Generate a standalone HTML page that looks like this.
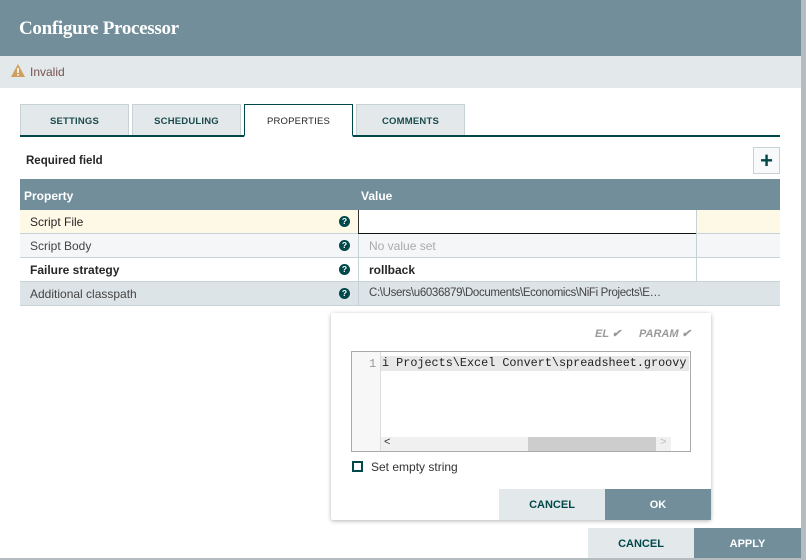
<!DOCTYPE html>
<html><head><style>
*{box-sizing:border-box;margin:0;padding:0}
body{width:806px;height:558px;overflow:hidden;background:#b4bcc0;font-family:"Liberation Sans",sans-serif;position:relative}
.dlg{position:absolute;left:0;top:0;width:801px;height:558px;background:#fff}
.hdr{height:56px;background:#728e9b;color:#fff;font-family:"Liberation Serif",serif;font-weight:bold;font-size:19px;padding:18px 0 0 19px;letter-spacing:-0.3px}
.inv{height:32px;background:#e3e8eb;font-size:12px;color:#775351;padding:9px 0 0 30px;position:relative}
.tabs{position:absolute;top:104px;left:20px;width:760px;height:33px;border-bottom:2px solid #004849}
.tab{position:absolute;top:0;height:31px;width:109px;background:#e3e8eb;border:1px solid #c7d2d7;border-bottom:none;font-size:9.5px;color:#1a4a4c;text-align:center;line-height:33px;font-weight:bold;letter-spacing:.2px}
.tab.act{background:#fff;border:1px solid #004849;border-bottom:2px solid #fff;height:33px;color:#262626;font-weight:normal}
.abs{position:absolute}
.row{position:absolute;left:20px;width:760px;height:24px;font-size:12px;border-bottom:1px solid #c7d2d7}
.row span{position:absolute;top:5px}
.q{position:absolute;left:319px;top:6px;width:11px;height:11px;border-radius:50%;background:#004849;color:#fff;font-size:8.5px;font-weight:bold;text-align:center;line-height:11px}
.btn{position:absolute;font-size:11px;font-weight:bold;text-align:center}
</style></head><body>
<div class="dlg">
<div class="hdr">Configure Processor</div>
<div class="inv"><svg class="abs" style="left:11px;top:8px" width="14" height="13" viewBox="0 0 14 13"><path d="M7 0L14 13H0Z" fill="#cf9f5d"/><rect x="6.2" y="4" width="1.6" height="5" fill="#fff"/><rect x="6.2" y="10" width="1.6" height="1.6" fill="#fff"/></svg><b style="font-weight:normal">Invalid</b></div>
<div class="tabs">
<div class="tab" style="left:0">SETTINGS</div>
<div class="tab" style="left:112px">SCHEDULING</div>
<div class="tab act" style="left:224px">PROPERTIES</div>
<div class="tab" style="left:336px">COMMENTS</div>
</div>
<div class="abs" style="left:26px;top:155px;font-size:11.5px;font-weight:bold;color:#262626">Required field</div>
<div class="abs" style="left:753px;top:147px;width:27px;height:27px;border:1px solid #c7d2d7;background:#f8f9fa;color:#004849;font-size:22px;font-weight:bold;text-align:center;line-height:25px">+</div>
<div class="abs" style="left:20px;top:179px;width:760px;height:31px;background:#728e9b;color:#fff;font-size:12px;font-weight:bold"><span class="abs" style="left:4px;top:10px">Property</span><span class="abs" style="left:341px;top:10px">Value</span></div>
<div class="row" style="top:210px;background:#fef9e6"><span style="left:10px;color:#262626">Script File</span><div class="q">?</div><div class="abs" style="left:338px;top:0;width:339px;height:24px;background:#fff;border-left:1px solid #333;border-bottom:1px solid #111"></div><div class="abs" style="left:676px;top:0;height:24px;border-left:1px solid #c7d2d7"></div></div>
<div class="row" style="top:234px;background:#f4f6f7"><span style="left:10px;color:#444">Script Body</span><div class="q">?</div><span style="left:349px;color:#aaa">No value set</span><div class="abs" style="left:338px;top:0;height:24px;border-left:1px solid #c7d2d7"></div><div class="abs" style="left:676px;top:0;height:24px;border-left:1px solid #c7d2d7"></div></div>
<div class="row" style="top:258px;background:#fff"><span style="left:10px;font-weight:bold;color:#262626">Failure strategy</span><div class="q">?</div><span style="left:349px;font-weight:bold;color:#262626">rollback</span><div class="abs" style="left:338px;top:0;height:24px;border-left:1px solid #c7d2d7"></div><div class="abs" style="left:676px;top:0;height:24px;border-left:1px solid #c7d2d7"></div></div>
<div class="row" style="top:282px;background:#dde4e7"><span style="left:349px;color:#444;font-size:11.5px;width:328px;white-space:nowrap;overflow:hidden;letter-spacing:-0.35px">C:\Users\u6036879\Documents\Economics\NiFi Projects\E…</span><span style="left:10px;color:#444">Additional classpath</span><div class="q">?</div><div class="abs" style="left:338px;top:0;height:24px;border-left:1px solid #c7d2d7"></div></div>
<div class="btn" style="left:588px;top:528px;width:106px;height:30px;background:#e3e8eb;color:#004849;line-height:32px">CANCEL</div>
<div class="btn" style="left:694px;top:528px;width:107px;height:30px;background:#728e9b;color:#fff;line-height:32px">APPLY</div>
</div>
<div class="abs" style="left:331px;top:313px;width:380px;height:207px;background:#fff;box-shadow:0 1px 4px rgba(0,0,0,.3);border-radius:2px">
<div class="abs" style="left:264px;top:14px;font-size:11px;font-style:italic;font-weight:bold;color:#999">EL ✔</div>
<div class="abs" style="left:308px;top:14px;font-size:11px;font-style:italic;font-weight:bold;color:#999">PARAM ✔</div>
<div class="abs" style="left:20px;top:38px;width:340px;height:101px;border:1px solid #aaa;background:#fff;overflow:hidden">
<div class="abs" style="left:0;top:0;width:29px;height:100px;background:#f7f7f7;border-right:1px solid #ddd"></div>
<div class="abs" style="left:17px;top:5px;font-family:'Liberation Mono',monospace;font-size:12px;color:#999">1</div>
<div class="abs" style="left:29px;top:4px;width:308px;height:15px;background:#e8e8e8"></div>
<div class="abs" style="left:30px;top:4px;font-family:'Liberation Mono',monospace;font-size:11.8px;color:#222;white-space:nowrap">i Projects\Excel Convert\spreadsheet.groovy</div>
<div class="abs" style="left:29px;top:85px;width:290px;height:15px;background:#f0f0f0"></div>
<div class="abs" style="left:176px;top:85px;width:128px;height:15px;background:#cdcdcd"></div>
<div class="abs" style="left:32px;top:84px;font-size:11px;color:#333">&lt;</div>
<div class="abs" style="left:308px;top:84px;font-size:11px;color:#bbb">&gt;</div>
</div>
<div class="abs" style="left:21px;top:148px;width:11px;height:11px;border:2px solid #004849"></div>
<div class="abs" style="left:40px;top:147px;font-size:12px;color:#333">Set empty string</div>
<div class="btn" style="left:168px;top:176px;width:106px;height:31px;background:#e3e8eb;color:#004849;line-height:33px">CANCEL</div>
<div class="btn" style="left:274px;top:176px;width:106px;height:31px;background:#728e9b;color:#fff;line-height:33px">OK</div>
</div>
</body></html>
